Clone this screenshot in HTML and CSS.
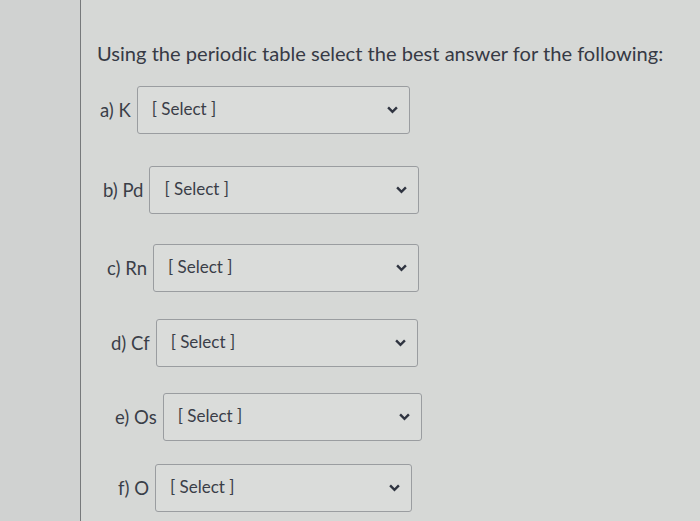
FILE: index.html
```html
<!DOCTYPE html>
<html>
<head>
<meta charset="utf-8">
<link rel="stylesheet" href="styles.css">
</head>
<body>
<div class="page">
  <div class="gutter"></div>
  <div class="panel">
    <p class="question">Using the periodic table select the best answer for the following:</p>
    <div class="rows">
      <div class="row r1"><span class="label">a) K</span><div class="select"><span>[ Select ]</span><svg class="chev" viewBox="0 0 10 7" width="11" height="8"><path d="M1 1.2 L5 5.2 L9 1.2" fill="none" stroke="#2f3440" stroke-width="2.2"/></svg></div></div>
      <div class="row r2"><span class="label">b) Pd</span><div class="select"><span>[ Select ]</span><svg class="chev" viewBox="0 0 10 7" width="11" height="8"><path d="M1 1.2 L5 5.2 L9 1.2" fill="none" stroke="#2f3440" stroke-width="2.2"/></svg></div></div>
      <div class="row r3"><span class="label">c) Rn</span><div class="select"><span>[ Select ]</span><svg class="chev" viewBox="0 0 10 7" width="11" height="8"><path d="M1 1.2 L5 5.2 L9 1.2" fill="none" stroke="#2f3440" stroke-width="2.2"/></svg></div></div>
      <div class="row r4"><span class="label">d) Cf</span><div class="select"><span>[ Select ]</span><svg class="chev" viewBox="0 0 10 7" width="11" height="8"><path d="M1 1.2 L5 5.2 L9 1.2" fill="none" stroke="#2f3440" stroke-width="2.2"/></svg></div></div>
      <div class="row r5"><span class="label">e) Os</span><div class="select"><span>[ Select ]</span><svg class="chev" viewBox="0 0 10 7" width="11" height="8"><path d="M1 1.2 L5 5.2 L9 1.2" fill="none" stroke="#2f3440" stroke-width="2.2"/></svg></div></div>
      <div class="row r6"><span class="label">f) O</span><div class="select"><span>[ Select ]</span><svg class="chev" viewBox="0 0 10 7" width="11" height="8"><path d="M1 1.2 L5 5.2 L9 1.2" fill="none" stroke="#2f3440" stroke-width="2.2"/></svg></div></div>
    </div>
  </div>
</div>
</body>
</html>
```

FILE: styles.css
```css
html, body {
  margin: 0;
  padding: 0;
  height: 100%;
}
body {
  background: #d3d5d4;
  font-family: Lato, "Open Sans", sans-serif;
  color: #3a3e48;
  overflow: hidden;
}
.page {
  display: flex;
  height: 521px;
}
.gutter {
  width: 80px;
  flex: none;
  background: #d0d2d1;
}
.panel {
  flex: 1;
  border-left: 1px solid #77797b;
  padding: 38px 0 0 16px;
  background: #d6d8d6;
}
.question {
  margin: 0;
  font-size: 20.1px;
  line-height: 30px;
  color: #363a45;
}
.rows {
  display: flex;
  flex-direction: column;
  margin-top: 18px;
}
.row {
  display: flex;
  align-items: center;
  height: 48px;
}
.label {
  font-size: 18.5px;
  color: #3a3e48;
  padding-right: 6px;
}
.select {
  box-sizing: border-box;
  width: 266px;
  height: 48px;
  border: 1.5px solid #9a9da0;
  border-radius: 3px;
  background: #dadcda;
  display: flex;
  align-items: center;
  justify-content: space-between;
  padding: 0 11px 0 14px;
  font-size: 17px;
  color: #3a3e48;
}
.select span {
  line-height: 22px;
  margin-top: -2px;
}
.r1 { padding-left: 3px; }
.r2 { padding-left: 6px; margin-top: 32px; }
.r3 { padding-left: 10px; margin-top: 30px; }
.r4 { padding-left: 14px; margin-top: 27px; }
.r5 { padding-left: 18px; margin-top: 26px; }
.r6 { padding-left: 21px; margin-top: 23px; }
.r1 .select { width: 273px; }
.r2 .select { width: 270px; }
.r3 .select { width: 266px; }
.r4 .select { width: 262px; }
.r5 .select { width: 259px; }
.r6 .select { width: 257px; }
```
